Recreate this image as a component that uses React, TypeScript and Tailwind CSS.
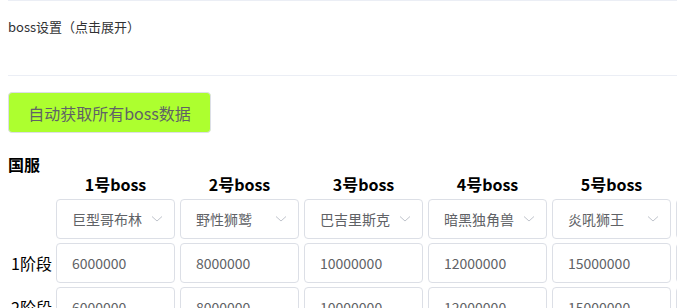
const bosses = [
  { title: "1号boss", name: "巨型哥布林", hp: "6000000" },
  { title: "2号boss", name: "野性狮鹫", hp: "8000000" },
  { title: "3号boss", name: "巴吉里斯克", hp: "10000000" },
  { title: "4号boss", name: "暗黑独角兽", hp: "12000000" },
  { title: "5号boss", name: "炎吼狮王", hp: "15000000" },
  { title: "6号boss", name: "巨型哥布林", hp: "6000000" },
];

const stages = ["1阶段", "2阶段"];

function Arrow() {
  return (
    <svg width="12" height="8" viewBox="0 0 12 8" className="shrink-0" fill="none">
      <polyline points="1,1.5 6,6 11,1.5" stroke="#c0c4cc" strokeWidth="1" />
    </svg>
  );
}

function BossSelect({ value }: { value: string }) {
  return (
    <div className="flex h-10 w-[119px] shrink-0 items-center justify-between rounded-[4px] border border-[#dcdfe6] bg-white pl-[15px] pr-[11px] text-[14px] text-[#606266]">
      <span className="truncate">{value}</span>
      <Arrow />
    </div>
  );
}

function HpInput({ value }: { value: string }) {
  return (
    <div className="flex h-10 w-[119px] shrink-0 items-center rounded-[4px] border border-[#dcdfe6] bg-white px-[15px] text-[14px] text-[#606266]">
      {value}
    </div>
  );
}

export default function App() {
  return (
    <div
      className="h-[308px] w-full overflow-hidden bg-white"
      style={{ fontFamily: '"Noto Sans CJK SC", "Microsoft YaHei", sans-serif' }}
    >
      <div className="w-[900px] pl-2">
        <div className="border-t border-b border-[#ebeef5]">
          <div className="flex h-[74px] items-start pt-[15px] text-[13px] leading-[22px] text-[#303133]">
            boss设置（点击展开）
          </div>
        </div>

        <button className="mt-4 flex h-[41px] w-[203px] items-center justify-center rounded-[4px] border border-[#dcdfe6] bg-[#adff2f] text-[16px] text-[#606266]">
          自动获取所有boss数据
        </button>

        <div className="mt-[21px] text-[16px] font-bold leading-5 text-black">国服</div>

        <div className="flex">
          <div className="w-12 shrink-0" />
          <div className="flex gap-[5px]">
            {bosses.map((b) => (
              <div key={b.title} className="h-5 w-[119px] shrink-0 text-center text-[16px] font-bold leading-5 text-black">
                {b.title}
              </div>
            ))}
          </div>
        </div>

        <div className="mt-[5px] flex flex-col gap-1">
          <div className="flex">
            <div className="w-12 shrink-0" />
            <div className="flex gap-[5px]">
              {bosses.map((b) => (
                <BossSelect key={b.title} value={b.name} />
              ))}
            </div>
          </div>
          {stages.map((s) => (
            <div key={s} className="flex">
              <div className="flex w-12 shrink-0 items-center justify-end pr-1 text-[16px] text-black">{s}</div>
              <div className="flex gap-[5px]">
                {bosses.map((b) => (
                  <HpInput key={b.title} value={b.hp} />
                ))}
              </div>
            </div>
          ))}
        </div>
      </div>
    </div>
  );
}
